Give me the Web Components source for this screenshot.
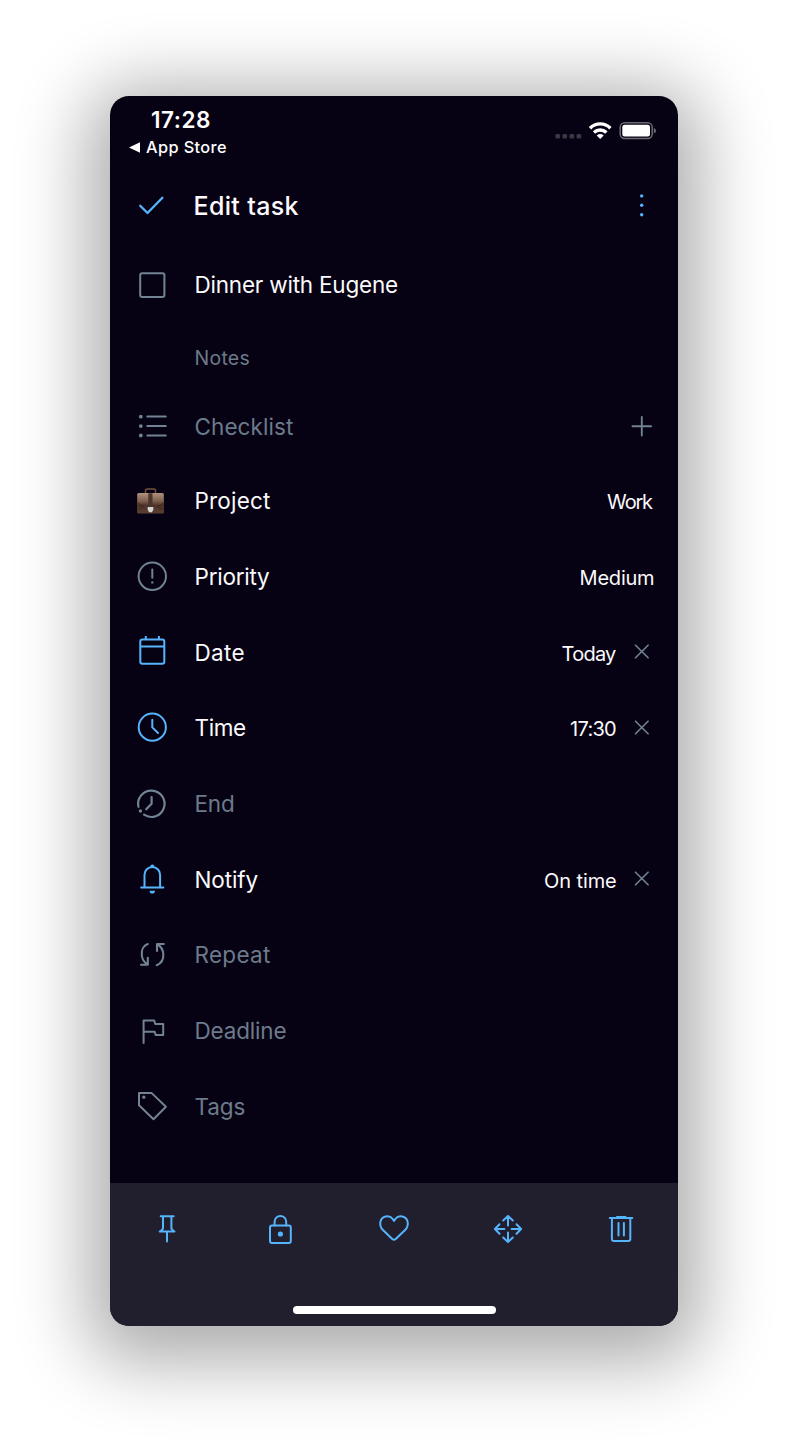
<!DOCTYPE html>
<html lang="en"><head><meta charset="utf-8"><title>Edit task</title>
<style>
html,body{margin:0;background:#fff}
body{width:788px;height:1451px;overflow:hidden;display:flex;justify-content:center;align-items:flex-start;padding-top:96px;box-sizing:border-box;font-family:Inter,"Noto Sans",sans-serif}
</style></head><body>
<task-screen></task-screen>
<script>
const P = {
check:'<path d="M4.2 15.8l7.3 7.2L26.4 7.8" stroke-width="2.3"/>',
box:'<rect x="4.2" y="4.2" width="24.2" height="23.8" rx="2"/>',
none:'',
list:'<path d="M11.3 5.6h18.5M11.3 15.1h18.5M11.3 24.5h18.5"/><g fill="currentColor" stroke="none"><circle cx="4.8" cy="5.7" r="1.9"/><circle cx="4.8" cy="15.1" r="1.9"/><circle cx="4.8" cy="24.5" r="1.9"/></g>',
alert:'<circle cx="16.3" cy="15.3" r="13.7"/><path d="M16.3 8.6v8.2"/><circle cx="16.3" cy="21.4" r="1.2" fill="currentColor" stroke="none"/>',
date:'<rect x="4.3" y="3.6" width="24" height="24.2" rx="2"/><path d="M4.3 10.4h24M9.8 0v3.400M22.9 0v3.400" stroke-linecap="butt"/>',
clock:'<circle cx="16.3" cy="15.2" r="13.6"/><path d="M16.3 7.8v7.6l5.7 5.6"/>',
end:'<path d="M2.5 18.8A13.2 13.2 0 1 1 8 26.7" stroke-width="2.2"/><path d="M15.6 9v6.8l-5.4 5.5" stroke-width="2.2"/><circle cx="4.4" cy="23" r="1.7" fill="currentColor" stroke="none"/>',
bell:'<path d="M8.5 24.5V11.8a7.8 7.8 0 0 1 15.6 0v12.7M5.2 24.5h22.2"/><path d="M14.2 4.6a2.1 3.2 0 0 1 4.2 0zM13.6 27.8h5.4a2.7 2.8 0 0 1-5.4 0z" fill="currentColor" stroke="none"/>',
repeat:'<path d="M11.8 5C7.4 6.6 5.3 11.3 5.8 16c.3 4.2 2.6 7.6 6 9.600M11.800 18.800v7H5M21 12V5h6.800M21 5c3.900 2.300 6.100 6.100 6.300 10.300.3 4.800-2.200 9.200-6.600 10.900" stroke-width="2.100"/>',
flag:'<path d="M7.600 28V5.400h10.600l1 3.500h8v11.200h-7.400l-1.200-3.400H7.600"/>',
tag:'<path d="M3 3.100h12.700l14.200 13.700-12.400 12.500L3 15.200z"/><circle cx="7.800" cy="7.200" r="1.600" fill="currentColor" stroke="none"/>',
work:'<defs><linearGradient id="l" x2="0" y2="1"><stop stop-color="#b0917c"/><stop offset=".4" stop-color="#7d5f4d"/><stop offset=".6" stop-color="#4d342a"/><stop offset="1" stop-color="#5b4030"/></linearGradient></defs><g stroke="none"><path d="M9.500 8V5.700Q9.500 4 11.500 4h6q2 0 2 1.700V8" fill="none" stroke="#76523d" stroke-width="1.400"/><path d="M2.600 8h23.800q1.300 0 1.400 1.600l.2 17.400q0 1.600-1.600 1.600H2.600Q1 28.600 1 27l.2-17.400Q1.300 8 2.600 8z" fill="url(#l)"/><path d="M2 18.200q1 2 6 3.200l-5 3M27 18.200q-1 2-6 3.200l5 3" fill="none" stroke="#38231c" stroke-width=".8"/><path d="M12.300 8.300h4.200v14h-4.200z" fill="#4b342b"/><path d="M11.700 22h5.600v3l-1.500 2.200h-2.600L11.700 25z" fill="#d8d4d4"/></g>',
plus:'<path d="M6.500 15.200h18.600M15.800 5.900v18.600" stroke-width="1.900"/>',
x:'<path d="M9.500 9.200l12.600 12.600M22.100 9.200L9.500 21.800" stroke-width="1.600"/>',
more:'<g fill="currentColor" stroke="none"><circle cx="15.700" cy="5.900" r="1.700"/><circle cx="15.700" cy="15.300" r="1.700"/><circle cx="15.700" cy="24.800" r="1.700"/></g>',
pin:'<path d="M9.700 3.200h12.900M12 3.200v12.400l-2.500 2.900M20.400 3.200v12.400l2.500 2.900M8.700 18.600h14.800M16 18.600v9.800"/>',
lock:'<rect x="6" y="12.400" width="20.800" height="17.600" rx="2"/><path d="M10.600 12.400V8.700a5.800 5.800 0 0 1 11.600 0v3.700"/><circle cx="16.400" cy="21" r="2.600" fill="currentColor" stroke="none"/>',
heart:'<path d="M14.300 26L4.900 17C2.300 14.300 1.800 11.600 2.400 8.700 3.700 3 11.200 1.500 14.700 6l1.300 1.900L17.300 6c3.500-4.500 11-3 12.300 2.700.6 2.900.1 5.600-2.500 8.300L17.700 26q-1.700 1.300-3.400 0z"/>',
move:'<path d="M16 12.400V3.200M11.200 7.500L16 2.900l4.800 4.600M16 19.600v9.200M11.200 24.500l4.800 4.600 4.800-4.600M12.400 16H3.200M7.500 11.200L2.900 16l4.600 4.800M19.600 16h9.200M24.500 11.200l4.600 4.800-4.600 4.800"/>',
trash:'<path d="M4.800 5h22.500M12 3.900h8.500M6.900 5v21q0 2 2 2h14.400q2 0 2-2V5M13.500 10v12.600M18.900 10v12.600"/>'
};
class AppIcon extends HTMLElement{
  connectedCallback(){
    this.attachShadow({mode:'open'}).innerHTML=`<style>:host{display:block;width:32px;height:32px;flex:none}svg{display:block;overflow:visible}</style><svg width="32" height="32" viewBox="0 0 32 32" fill="none" stroke="currentColor" stroke-width="2" stroke-linecap="round" stroke-linejoin="round" aria-hidden="true">${P[this.getAttribute('name')]||''}</svg>`;
  }
}
customElements.define('app-icon',AppIcon);

/* Label tracked to a given visible width, with its side bearings trimmed. */
class TrackedText extends HTMLElement{
  connectedCallback(){
    const size=+this.getAttribute('size'), weight=this.getAttribute('weight')||400, w=+this.getAttribute('w');
    const t=this.textContent, c=document.createElement('canvas').getContext('2d');
    c.font=`${weight} ${size}px Inter`;
    const m=c.measureText(t);
    const ls=(w-m.actualBoundingBoxLeft-m.actualBoundingBoxRight)/(t.length-1);
    this.attachShadow({mode:'open'}).innerHTML=`<style>:host{display:block;flex:none;white-space:nowrap;font:${weight} ${size}px/1.3 Inter,"Noto Sans",sans-serif;letter-spacing:${ls}px;margin-left:${m.actualBoundingBoxLeft}px;margin-right:${m.actualBoundingBoxRight-m.width-ls}px}</style><slot></slot>`;
  }
}
customElements.define('tracked-text',TrackedText);

class StatusBar extends HTMLElement{
  connectedCallback(){
    this.attachShadow({mode:'open'}).innerHTML=`<style>
    :host{display:flex;justify-content:space-between;height:72px;color:#fff;box-sizing:border-box;padding:9px 21px 0 19px}
    .time{padding-left:23px}
    .back{display:flex;align-items:center;gap:6px;margin-top:3px}
    .right{display:flex;align-items:flex-start;padding-top:15px}
    svg{display:block}</style>
    <div><div class="time"><tracked-text size="22.5" weight="600" w="58">17:28</tracked-text></div>
    <div class="back"><svg width="11" height="11" fill="#fff"><path d="M0 5.500L11 .3v10.400z"/></svg><tracked-text size="16.300" weight="500" w="80">App Store</tracked-text></div></div>
    <div class="right"><svg width="103" height="22" viewBox="554 120 103 22">
    <g fill="#3b3844"><rect x="555.300" y="134" width="4.800" height="4.600" rx="1.500"/><rect x="562.300" y="134" width="4.800" height="4.600" rx="1.500"/><rect x="569.400" y="134" width="4.800" height="4.600" rx="1.500"/><rect x="576.500" y="134" width="4.800" height="4.600" rx="1.500"/></g>
    <g fill="none" stroke="#fff" stroke-width="3.400"><path d="M590 128.200a14.300 14.300 0 0 1 20.400 0"/><path d="M594 132.500a8.800 8.800 0 0 1 12.400 0"/></g><path d="M596.700 135.500q3.500-2.800 7 0l-3.500 3.500z" fill="#fff"/>
    <rect x="620.200" y="122.700" width="32" height="15.800" rx="4.500" fill="none" stroke="#6d6a75" stroke-width="1.500"/><rect x="622.300" y="124.800" width="27.700" height="11.600" rx="2.500" fill="#fff"/><path d="M653.800 128q2.200.5 2.200 2.700t-2.200 2.700z" fill="#6d6a75"/></svg></div>`;
  }
}
customElements.define('status-bar',StatusBar);

class TaskRow extends HTMLElement{
  connectedCallback(){
    this.attachShadow({mode:'open'}).innerHTML=`<style>
    :host{display:flex;align-items:center;flex:none;height:75.7px;box-sizing:border-box;padding:0 20px 0 26px;color:#fbfafc}
    :host([off]){color:#6c7b8b}
    .lead{color:#728393;margin-right:27.500px}
    :host([on]) .lead{color:#56b4fc}
    .value{margin-left:auto;padding:3px 4.900px 0 0;color:#fbfafc}
    ::slotted([slot=action]){color:#728393;margin-left:5px}
    :host([head]) ::slotted([slot=action]){color:#56b4fc}
    .label{display:flex}
    :host([head]) .label{padding-top:1.500px}</style>
    <app-icon class="lead" name="${this.getAttribute('icon')}"></app-icon><div class="label"><slot></slot></div><div class="value"><slot name="value"></slot></div><slot name="action"></slot>`;
  }
}
customElements.define('task-row',TaskRow);

class ToolBar extends HTMLElement{
  connectedCallback(){
    this.attachShadow({mode:'open'}).innerHTML=`<style>
    :host{display:flex;flex-direction:column;align-items:center;height:142.600px;flex:none;margin-top:auto;background:#211f2e;color:#56b4fc;box-sizing:border-box;padding:29.300px 0 12.500px;justify-content:space-between}
    .grid{display:grid;grid-template-columns:repeat(5,1fr);width:100%;justify-items:center}
    .home{width:203px;height:7.500px;border-radius:4px;background:#fff}</style>
    <div class="grid"><slot></slot></div><div class="home"></div>`;
  }
}
customElements.define('tool-bar',ToolBar);

class TaskScreen extends HTMLElement{
  connectedCallback(){
    this.attachShadow({mode:'open'}).innerHTML=`<style>
    :host{display:block;width:568px;height:1230px;border-radius:19px;box-shadow:0 14px 72px 22px rgba(0,0,0,.33)}
    .in{display:flex;flex-direction:column;height:100%;background:#070213;border-radius:19px;overflow:hidden}
    .head{height:75px}.title{height:84px}.notes{height:63px}.check{height:73px}</style>
    <div class="in"><status-bar></status-bar>
    <task-row class="head" icon="check" on head><tracked-text size="25" weight="500" w="103">Edit task</tracked-text><app-icon slot="action" name="more"></app-icon></task-row>
    <task-row class="title" icon="box"><tracked-text size="22.500" w="202.500">Dinner with Eugene</tracked-text></task-row>
    <task-row class="notes" icon="none" off><tracked-text size="19.500" w="54">Notes</tracked-text></task-row>
    <task-row class="check" icon="list" off><tracked-text size="22.500" w="97.500">Checklist</tracked-text><app-icon slot="action" name="plus"></app-icon></task-row>
    <task-row icon="work"><tracked-text size="22.500" w="74.500">Project</tracked-text><tracked-text slot="value" size="20" w="46">Work</tracked-text></task-row>
    <task-row icon="alert"><tracked-text size="22.500" w="74.500">Priority</tracked-text><tracked-text slot="value" size="20" w="72.500">Medium</tracked-text></task-row>
    <task-row icon="date" on><tracked-text size="22.500" w="49">Date</tracked-text><tracked-text slot="value" size="20" w="54.500">Today</tracked-text><app-icon slot="action" name="x"></app-icon></task-row>
    <task-row icon="clock" on><tracked-text size="22.500" w="50.500">Time</tracked-text><tracked-text slot="value" size="20" w="46">17:30</tracked-text><app-icon slot="action" name="x"></app-icon></task-row>
    <task-row icon="end" off><tracked-text size="22.500" w="38.500">End</tracked-text></task-row>
    <task-row icon="bell" on><tracked-text size="22.500" w="63">Notify</tracked-text><tracked-text slot="value" size="20" w="71">On time</tracked-text><app-icon slot="action" name="x"></app-icon></task-row>
    <task-row icon="repeat" off><tracked-text size="22.500" w="74.500">Repeat</tracked-text></task-row>
    <task-row icon="flag" off><tracked-text size="22.500" w="91">Deadline</tracked-text></task-row>
    <task-row icon="tag" off><tracked-text size="22.500" w="49">Tags</tracked-text></task-row>
    <tool-bar><app-icon name="pin"></app-icon><app-icon name="lock"></app-icon><app-icon name="heart"></app-icon><app-icon name="move"></app-icon><app-icon name="trash"></app-icon></tool-bar></div>`;
  }
}
customElements.define('task-screen',TaskScreen);
</script></body></html>
